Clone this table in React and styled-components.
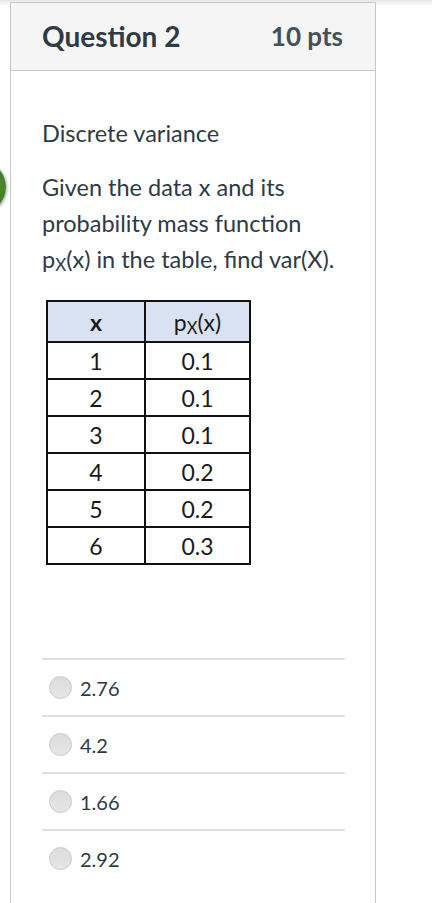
import React from 'react';
import styled, { createGlobalStyle } from 'styled-components';

const GlobalStyle = createGlobalStyle`
  html, body {
    margin: 0;
    padding: 0;
    background: linear-gradient(#e6e6e6 0px, #ffffff 6px) no-repeat, #ffffff;
    font-family: Lato, "Open Sans", sans-serif;
    color: #2d3b45;
  }
`;

const Page = styled.div`
  position: relative;
  padding: 2px 0 0 10px;
  height: 901px;
  overflow: hidden;
`;

const SideBadge = styled.div`
  position: absolute;
  left: -40px;
  top: 162px;
  width: 46px;
  height: 50px;
  border-radius: 50%;
  background: radial-gradient(circle at 70% 45%, #4f8f2c 0%, #3b7420 70%);
  box-shadow: 1px 1px 3px rgba(0, 0, 0, 0.35);
`;

const Card = styled.section`
  width: 364px;
  min-height: 920px;
  border: 1px solid #c4c8cb;
  background: #fff;
`;

const Header = styled.header`
  display: flex;
  justify-content: space-between;
  align-items: center;
  height: 67px;
  padding: 0 32px 2px 31px;
  box-sizing: border-box;
  height: 68px;
  background: #f5f5f5;
  border-bottom: 1px solid #c4c8cb;
`;

const Title = styled.h2`
  margin: 0;
  font-size: 28px;
  font-weight: 700;
  color: #2d3b45;
`;

const Points = styled.span`
  font-size: 26px;
  font-weight: 700;
  color: #44505a;
`;

const Body = styled.div`
  padding: 44px 30px 0 31px;
`;

const Text = styled.p`
  margin: 0 0 ${p => p.gap || 0}px;
  font-size: 23.5px;
  line-height: 36px;
  color: #2d3b45;
`;

const Sub = styled.sub`
  font-size: 0.72em;
  line-height: 0;
  vertical-align: -0.18em;
`;

const TableWrap = styled.div`
  margin: 23px 0 0 4px;
  width: 205px;
`;

const Table = styled.table`
  border-collapse: collapse;
  width: 100%;
  table-layout: fixed;
  font-family: Lato, "Open Sans", sans-serif;
  font-size: 23px;
  color: #1a1a1a;
`;

const Th = styled.th`
  width: ${p => p.w || 'auto'};
  height: 39px;
  padding: 0;
  border: 2px solid #111;
  background: #d9e2f3;
  font-weight: ${p => (p.bold ? 700 : 400)};
  text-align: center;
`;

const Td = styled.td`
  height: 35px;
  padding: 0;
  border: 2px solid #111;
  text-align: center;
`;

const Answers = styled.ul`
  list-style: none;
  margin: 93px 0 0;
  padding: 0;
`;

const Answer = styled.li`
  display: flex;
  align-items: center;
  gap: 8px;
  height: 55px;
  padding-left: 7px;
  border-top: 2px solid #e0e0e0;
  font-size: 20px;
  color: #2d3b45;
`;

const Radio = styled.span`
  width: 21px;
  height: 21px;
  border-radius: 50%;
  border: 1px solid #c9c9c9;
  background: linear-gradient(#dcdcdc, #e6e6e6);
  flex-shrink: 0;
`;

const rows = [
  [1, '0.1'],
  [2, '0.1'],
  [3, '0.1'],
  [4, '0.2'],
  [5, '0.2'],
  [6, '0.3'],
];

const choices = ['2.76', '4.2', '1.66', '2.92'];

export default function App() {
  return (
    <Page>
      <GlobalStyle />
      <SideBadge />
      <Card>
        <Header>
          <Title>Question 2</Title>
          <Points>10 pts</Points>
        </Header>
        <Body>
          <Text gap={18}>Discrete variance</Text>
          <Text>
            Given the data x and its probability mass function p<Sub>X</Sub>(x) in the
            table, find var(X).
          </Text>
          <TableWrap>
            <Table>
              <thead>
                <tr>
                  <Th bold w="96px">x</Th>
                  <Th>
                    p<Sub>X</Sub>(x)
                  </Th>
                </tr>
              </thead>
              <tbody>
                {rows.map(([x, p]) => (
                  <tr key={x}>
                    <Td>{x}</Td>
                    <Td>{p}</Td>
                  </tr>
                ))}
              </tbody>
            </Table>
          </TableWrap>
          <Answers>
            {choices.map(c => (
              <Answer key={c}>
                <Radio />
                {c}
              </Answer>
            ))}
          </Answers>
        </Body>
      </Card>
    </Page>
  );
}
